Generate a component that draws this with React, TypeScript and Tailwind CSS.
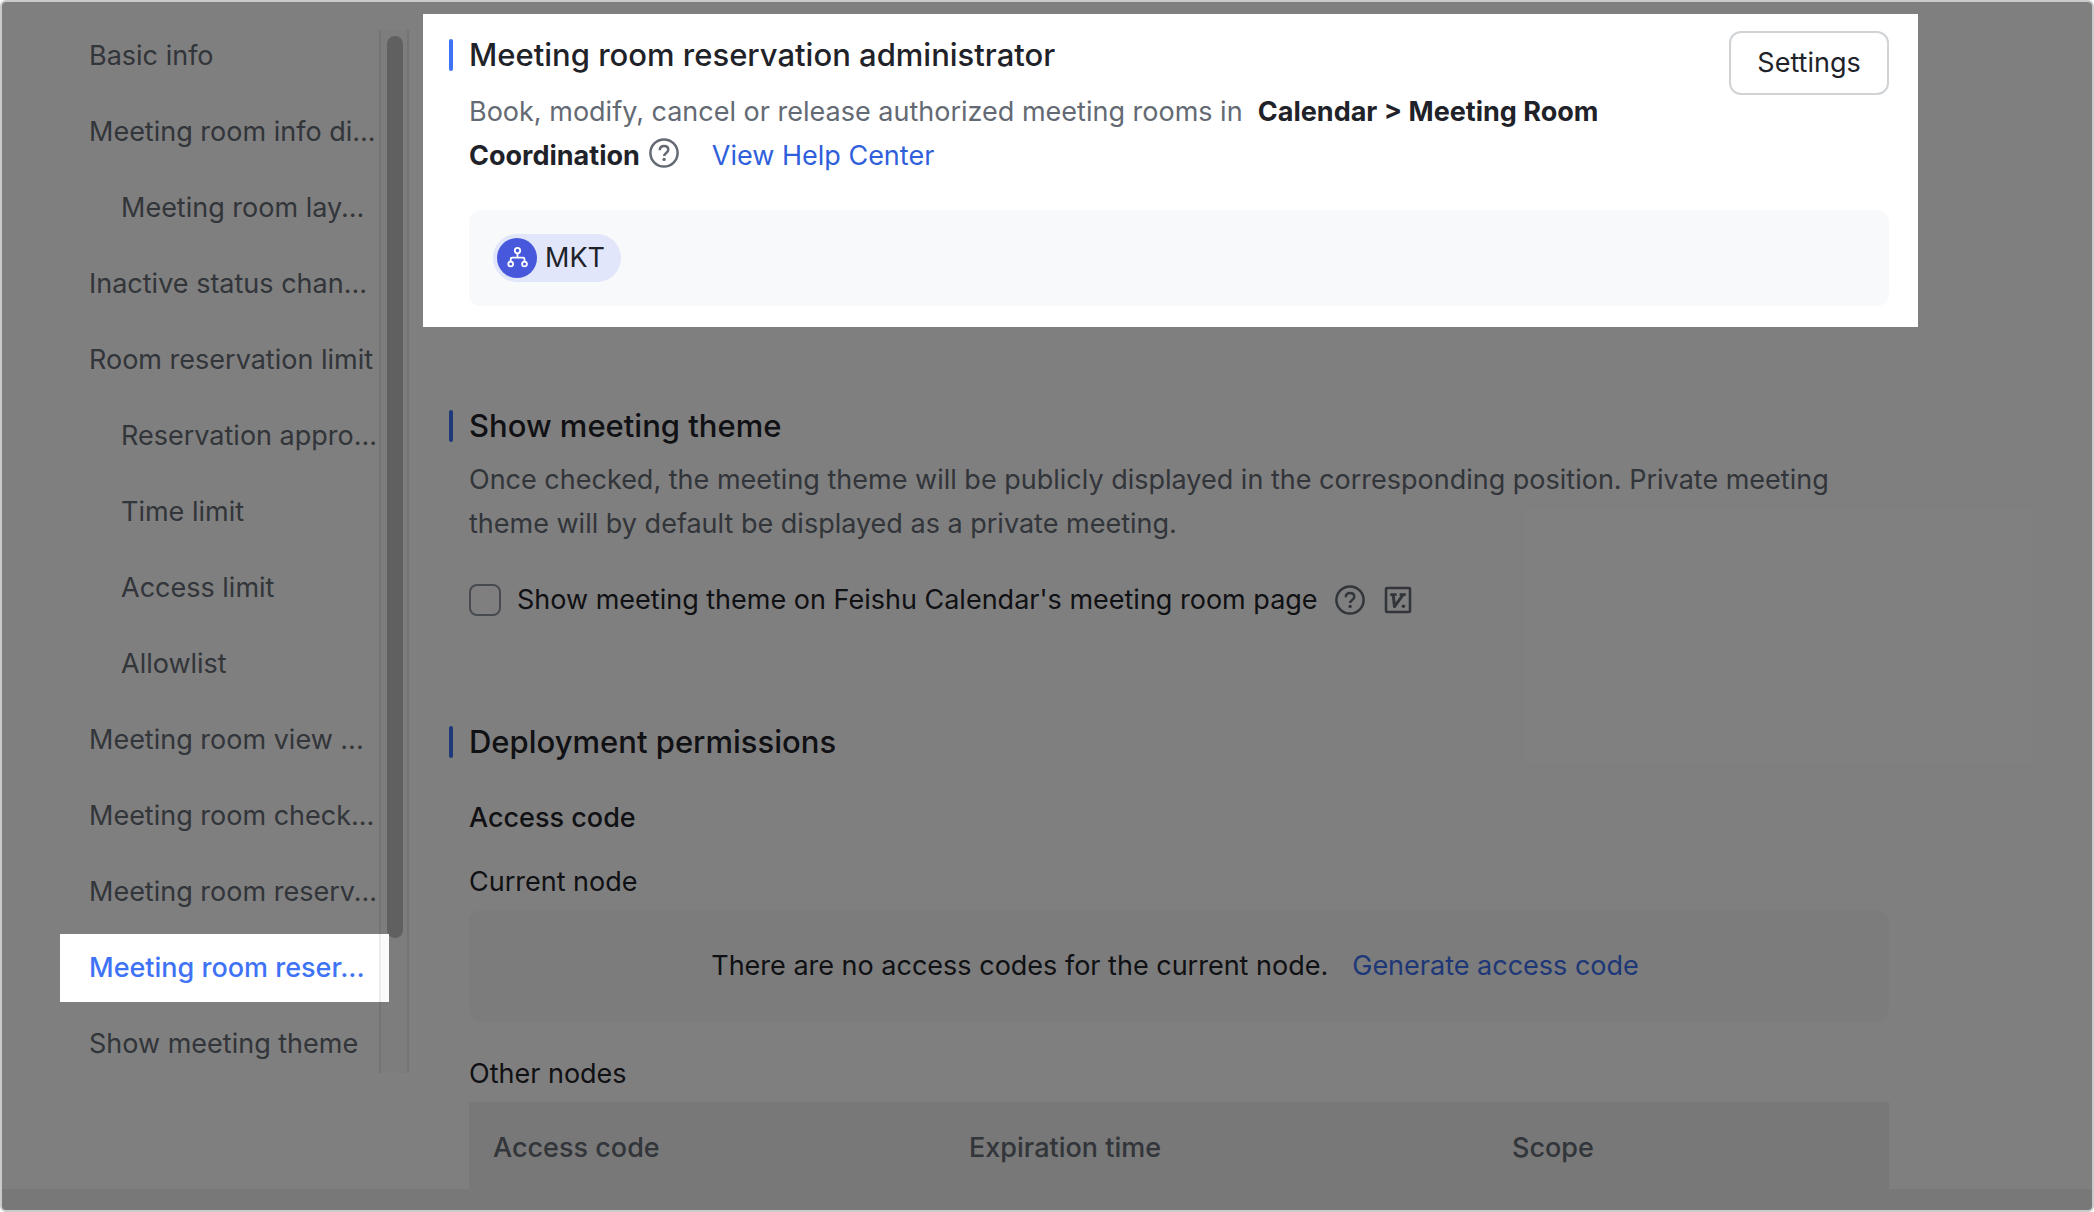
import React from 'react';

const navItems = [
    { label: 'Basic info' },
    { label: 'Meeting room info di...' },
    { label: 'Meeting room lay...', nested: true },
    { label: 'Inactive status chan...' },
    { label: 'Room reservation limit' },
    { label: 'Reservation appro...', nested: true },
    { label: 'Time limit', nested: true },
    { label: 'Access limit', nested: true },
    { label: 'Allowlist', nested: true },
    { label: 'Meeting room view ...' },
    { label: 'Meeting room check...' },
    { label: 'Meeting room reserv...' },
    { label: 'Meeting room reser...', active: true },
    { label: 'Show meeting theme' },
];

const HelpIcon = ({ className = '' }: { className?: string }) => (
    <svg viewBox="0 0 32 32" fill="none" stroke="currentColor" strokeWidth="2.5" className={`w-8 h-8 text-[#646a73] ${className}`}>
        <circle cx="16" cy="16" r="13.6" />
        <path d="M11.8 13.2c0-2.6 1.8-4.3 4.3-4.3s4.2 1.6 4.2 3.8c0 3.2-4.2 3.2-4.2 6.4" />
        <circle cx="16.1" cy="22.4" r="1.7" fill="currentColor" stroke="none" />
    </svg>
);

const VersionIcon = () => (
    <svg viewBox="0 0 32 32" fill="none" stroke="currentColor" strokeWidth="2.6" strokeLinejoin="round" className="w-8 h-8 text-[#646a73]">
        <rect x="4" y="4" width="24" height="24" rx="1" />
        <path d="M8.2 10.6h6.4M17.6 10.6h6.2" />
        <path d="M11.2 10.6l1.3 12 8.6-12" strokeWidth="3" />
        <circle cx="21.4" cy="22.2" r="1.8" fill="currentColor" stroke="none" />
    </svg>
);

const OrgIcon = () => (
    <svg viewBox="0 0 40 40" fill="none" stroke="white" strokeWidth="1.8" className="w-10 h-10 rounded-full bg-[#4858dc]">
        <circle cx="20.5" cy="12.6" r="2.7" />
        <circle cx="13.7" cy="26" r="2.4" />
        <circle cx="27.5" cy="26" r="2.4" />
        <path d="M20.5 15.3v4.4M13.7 23.6v-2.4q0-1.5 1.5-1.5h10.8q1.5 0 1.5 1.5v2.4" />
    </svg>
);

const SectionTitle = ({ children }: { children: React.ReactNode }) => (
    <div className="flex items-center gap-4">
        <span className="w-1 h-8 rounded-sm bg-[#3f73f6]" />
        <h2 className="text-[31px] leading-8 font-medium">{children}</h2>
    </div>
);

const Sidebar = () => (
    <aside className="flex shrink-0 self-start pl-[58px]">
        <nav className="w-[319px] pt-5">
            <ul className="flex flex-col gap-2">
                {navItems.map((item) => (
                    <li key={item.label} className={item.active ? 'relative z-20 flex w-[329px] bg-white' : ''}>
                        <a
                            href="#"
                            className={`flex h-[68px] items-center whitespace-nowrap ${item.nested ? 'pl-[61px]' : 'pl-[29px]'} ${item.active ? 'flex-1 font-medium text-[#3f73f6]' : 'text-[#646a73]'}`}
                        >
                            {item.label}
                        </a>
                        {item.active && <span className="w-[10px] border-l-2 border-[#ebebeb] bg-[#fafafa]" />}
                    </li>
                ))}
            </ul>
        </nav>
        <div className="mt-7 mb-[5px] w-[30px] border-x-2 border-[#e8e8e8] bg-[#fafafa] px-[6px] pt-[6px]">
            <div className="h-[902px] w-4 rounded-full bg-[#c1c1c1]" />
        </div>
    </aside>
);

const App = () => {
    return (
        <div className="relative flex min-h-screen flex-col overflow-hidden rounded-md border-2 border-[#c9cbcb] bg-[#f0f0f0] font-[Inter,sans-serif] text-[27px] leading-[44px] text-[#1f2329]">
            <div className="flex bg-white">
                <Sidebar />

                <main className="min-w-0 flex-1 pt-3 pr-[174px] pl-[14px]">
                    <section className="relative z-20 bg-white pt-[17px] pr-[29px] pb-[21px] pl-[26px]">
                        <div className="flex items-start gap-8">
                            <div className="flex-1 pt-2">
                                <SectionTitle>Meeting room reservation administrator</SectionTitle>
                                <p className="mt-[19px] pl-5 text-[#646a73]">
                                    Book, modify, cancel or release authorized meeting rooms in&nbsp;{' '}
                                    <strong className="font-bold text-[#1f2329]">Calendar &gt; Meeting Room Coordination</strong>
                                    <HelpIcon className="mx-2 inline-block align-[-4px]" />
                                    <a href="#" className="ml-6 text-[#2f5fdb]">View Help Center</a>
                                </p>
                            </div>
                            <button className="h-16 w-40 shrink-0 rounded-xl border-2 border-[#d0d3d6] bg-white">Settings</button>
                        </div>
                        <div className="mt-8 ml-5 flex h-24 items-center rounded-xl bg-[#f8f9fb] px-6">
                            <span className="flex h-12 items-center gap-2 rounded-full bg-[#e1e6fa] pr-4 pl-1">
                                <OrgIcon />
                                MKT
                            </span>
                        </div>
                    </section>

                    <section className="mt-[83px] pr-[29px] pl-[26px]">
                        <SectionTitle>Show meeting theme</SectionTitle>
                        <div className="pl-5">
                            <p className="mt-4 text-[#646a73]">
                                Once checked, the meeting theme will be publicly displayed in the corresponding position. Private meeting theme will by default be displayed as a private meeting.
                            </p>
                            <div className="mt-8 flex items-center gap-4">
                                <input
                                    id="show-theme"
                                    type="checkbox"
                                    className="h-8 w-8 appearance-none rounded-lg border-2 border-[#8f959e] bg-white checked:bg-[#3f73f6]"
                                />
                                <label htmlFor="show-theme">Show meeting theme on Feishu Calendar's meeting room page</label>
                                <HelpIcon />
                                <VersionIcon />
                            </div>
                        </div>
                    </section>

                    <section className="mt-[104px] pr-[29px] pl-[26px]">
                        <SectionTitle>Deployment permissions</SectionTitle>
                        <div className="pl-5">
                            <h3 className="mt-[38px] font-medium">Access code</h3>
                            <h4 className="mt-5">Current node</h4>
                            <div className="mt-[6px] flex h-28 items-center justify-center gap-6 rounded-xl bg-[#f8f8f8] pr-2">
                                <span>There are no access codes for the current node.</span>
                                <a href="#" className="text-[#3d6fee]">Generate access code</a>
                            </div>
                            <h4 className="mt-[30px]">Other nodes</h4>
                            <table className="mt-[6px] w-full table-fixed bg-[#f0f0f0] text-left text-[#646a73]">
                                <thead>
                                    <tr>
                                        <th className="w-[476px] pt-6 pb-[19px] pl-6 font-medium">Access code</th>
                                        <th className="w-[543px] pt-6 pb-[19px] pl-6 font-medium">Expiration time</th>
                                        <th className="pt-6 pb-[19px] pl-6 font-medium">Scope</th>
                                    </tr>
                                </thead>
                            </table>
                        </div>
                    </section>
                </main>
            </div>

            {/* dim layer, highlighted blocks sit above it */}
            <div className="pointer-events-none absolute inset-0 z-10 bg-black/50" />
        </div>
    );
};

export default App;
